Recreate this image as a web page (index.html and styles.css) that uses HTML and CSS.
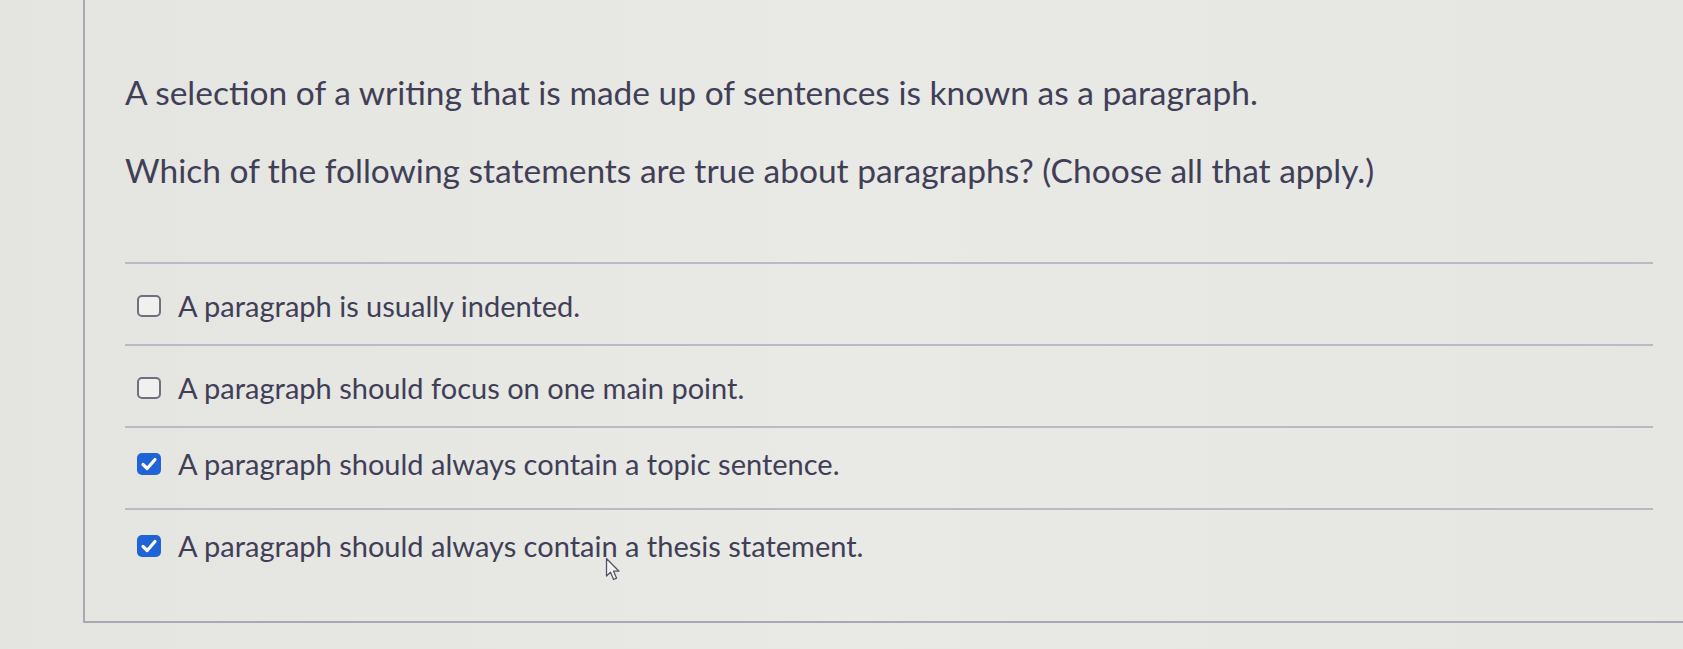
FILE: index.html
```html
<!DOCTYPE html>
<html lang="en">
<head>
<meta charset="utf-8">
<title>Quiz question</title>
<link rel="stylesheet" href="styles.css">
</head>
<body>
<div class="page">
  <div class="frame">
    <div class="question">
      <p class="stem">A selection of a writing that is made up of sentences is known as a paragraph.</p>
      <p class="stem">Which of the following statements are true about paragraphs? (Choose all that apply.)</p>
    </div>
    <ul class="answers">
      <li class="answer"><span class="box"></span><span class="label">A paragraph is usually indented.</span></li>
      <li class="answer"><span class="box"></span><span class="label">A paragraph should focus on one main point.</span></li>
      <li class="answer lower"><span class="box checked"><svg viewBox="0 0 24 22" width="24" height="22"><path d="M6 11.5 L10.2 15.5 L18 6.5" fill="none" stroke="#fff" stroke-width="3.2" stroke-linecap="round" stroke-linejoin="round"/></svg></span><span class="label">A paragraph should always contain a topic sentence.</span></li>
      <li class="answer lower"><span class="box checked"><svg viewBox="0 0 24 22" width="24" height="22"><path d="M6 11.5 L10.2 15.5 L18 6.5" fill="none" stroke="#fff" stroke-width="3.2" stroke-linecap="round" stroke-linejoin="round"/></svg></span><span class="label">A paragraph should always contain a thesis statement.</span></li>
    </ul>
  </div>
  <svg class="cursor" viewBox="0 0 18 26" width="18" height="26"><path d="M1.5 1.5 L1.5 19 L5.5 15.2 L8.6 22.5 L11.6 21.2 L8.6 14.2 L14 14.2 Z" fill="#f4f4f2" stroke="#55556a" stroke-width="1.3" stroke-linejoin="round"/></svg>
</div>
</body>
</html>
```
FILE: styles.css
```css
html, body {
  margin: 0;
  padding: 0;
}
body {
  background: linear-gradient(90deg, #e4e4e0 0%, #e9e9e6 50%, #e6e6e3 100%);
  font-family: Lato, "Open Sans", sans-serif;
  color: #403f57;
  width: 1683px;
  height: 649px;
  overflow: hidden;
}
.page {
  position: relative;
  height: 649px;
}
.frame {
  margin-left: 83px;
  width: 1600px;
  height: 623px;
  border-left: 2px solid #a9a9b4;
  border-bottom: 2px solid #a9a9b4;
  box-sizing: border-box;
  padding-left: 40px;
  padding-top: 72px;
}
.stem {
  margin: 0;
  font-size: 33.5px;
  line-height: 40px;
}
.stem + .stem {
  margin-top: 38px;
}
.answers {
  list-style: none;
  margin: 72px 0 0 0;
  padding: 0;
  width: 1528px;
}
.answer {
  display: flex;
  align-items: center;
  gap: 17px;
  height: 82px;
  border-top: 2px solid #babac4;
  box-sizing: border-box;
  padding-left: 12px;
  padding-top: 3px;
}
.answer.lower {
  padding-top: 0;
  padding-bottom: 9px;
}
.box {
  width: 24px;
  height: 22px;
  border: 2px solid #6f6f80;
  border-radius: 5px;
  box-sizing: border-box;
  background: #f0f0ee;
  flex: none;
  display: flex;
}
.box.checked {
  border: none;
  background: #1f64d6;
}
.label {
  font-size: 29px;
  line-height: 36px;
}
.cursor {
  position: absolute;
  left: 605px;
  top: 557px;
}
```
